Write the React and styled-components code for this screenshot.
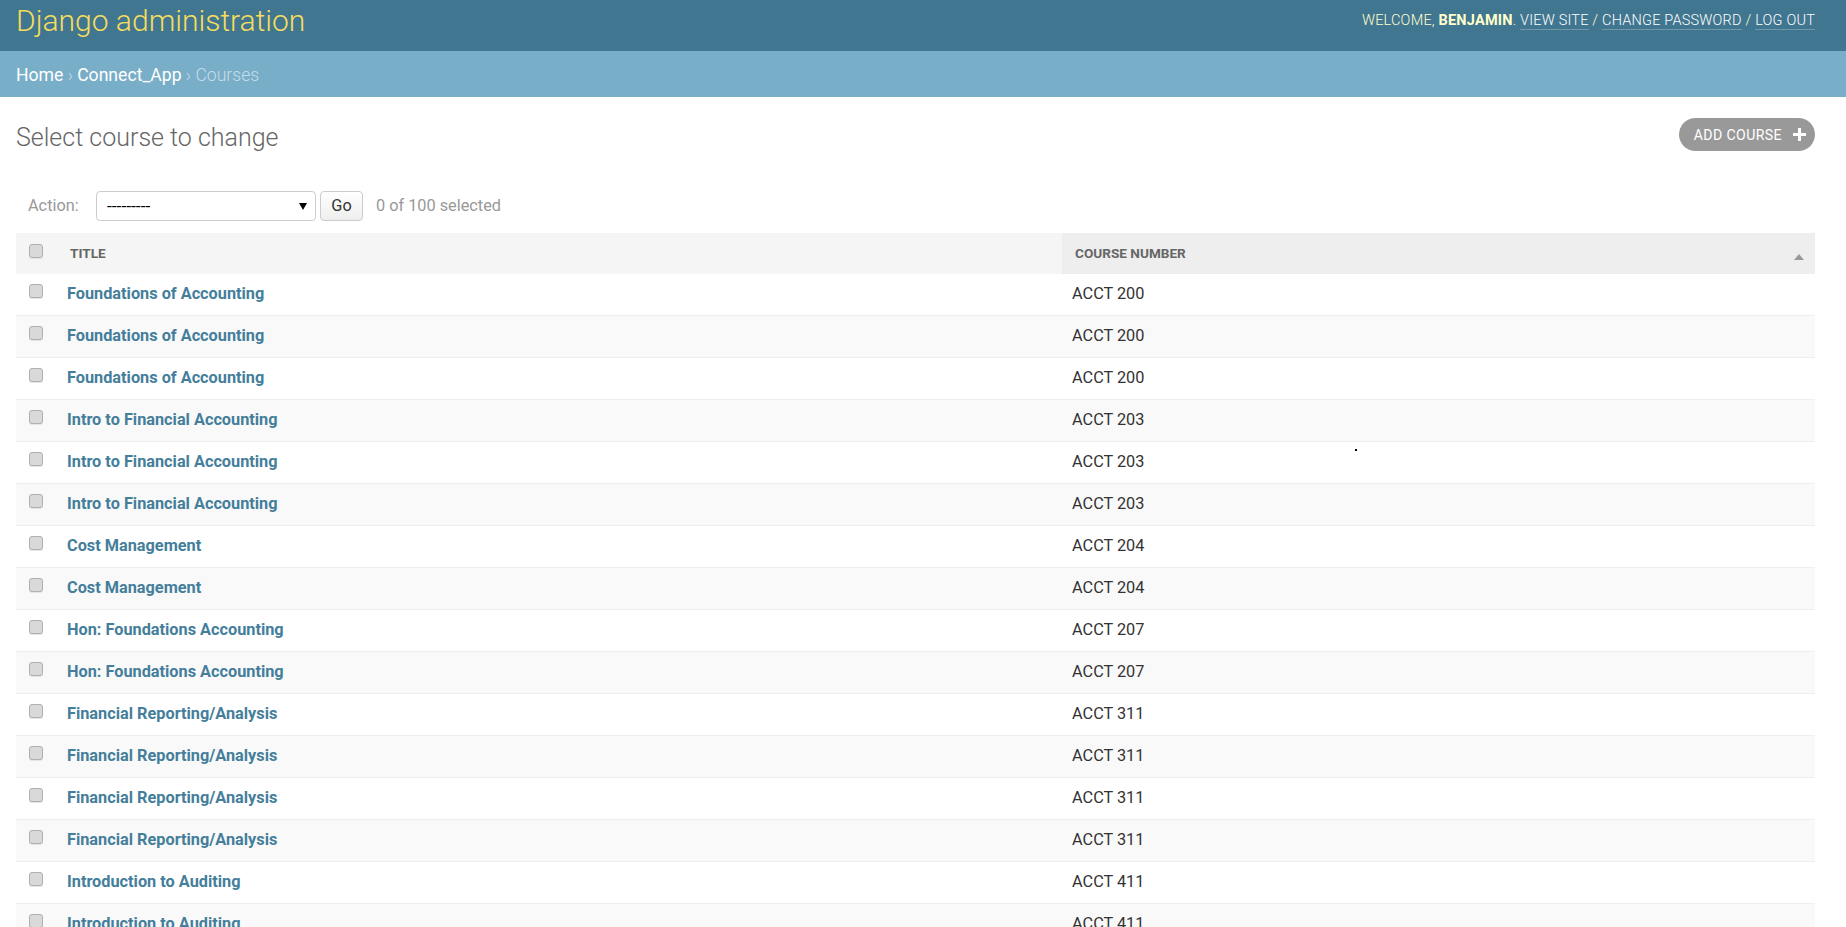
import React from "react";
import styled, { createGlobalStyle } from "styled-components";

const courses = [
  ["Foundations of Accounting", "ACCT 200"],
  ["Foundations of Accounting", "ACCT 200"],
  ["Foundations of Accounting", "ACCT 200"],
  ["Intro to Financial Accounting", "ACCT 203"],
  ["Intro to Financial Accounting", "ACCT 203"],
  ["Intro to Financial Accounting", "ACCT 203"],
  ["Cost Management", "ACCT 204"],
  ["Cost Management", "ACCT 204"],
  ["Hon: Foundations Accounting", "ACCT 207"],
  ["Hon: Foundations Accounting", "ACCT 207"],
  ["Financial Reporting/Analysis", "ACCT 311"],
  ["Financial Reporting/Analysis", "ACCT 311"],
  ["Financial Reporting/Analysis", "ACCT 311"],
  ["Financial Reporting/Analysis", "ACCT 311"],
  ["Introduction to Auditing", "ACCT 411"],
  ["Introduction to Auditing", "ACCT 411"],
];

const GlobalStyle = createGlobalStyle`
  html, body {
    margin: 0;
    height: 100%;
    overflow: hidden;
    background: #fff;
    color: #333;
    font-family: Roboto, "Liberation Sans", sans-serif;
  }
`;

const Header = styled.header`
  display: flex;
  justify-content: space-between;
  height: 51px;
  padding: 0 31px 0 16px;
  background: #417690;
  color: #ffc;
`;

const Branding = styled.h1`
  margin: 0;
  font-size: 30px;
  line-height: 41px;
  font-weight: 300;
  color: #f5dd5d;
`;

const UserTools = styled.div`
  padding-top: 12px;
  font-size: 14.5px;
  line-height: 17px;
  font-weight: 300;
  letter-spacing: 0.2px;
  text-transform: uppercase;
`;

const UserName = styled.strong`
  font-weight: 700;
`;

const ToolLink = styled.a`
  color: #fff;
  text-decoration: none;
  border-bottom: 1px solid rgba(255, 255, 255, 0.25);
`;

const Breadcrumbs = styled.nav`
  height: 46px;
  padding: 0 16px;
  background: #79aec8;
  color: #c4dce8;
  font-size: 17.6px;
  line-height: 48px;
  font-weight: 300;
`;

const Crumb = styled.a`
  color: #fff;
  font-weight: 400;
  text-decoration: none;
`;

const Content = styled.main`
  padding: 0 31px 0 16px;
`;

const TitleRow = styled.div`
  display: flex;
  justify-content: space-between;
  align-items: flex-start;
  height: 94px;
  padding-top: 21px;
  box-sizing: border-box;
`;

const Title = styled.h2`
  margin: 0;
  font-size: 25px;
  line-height: 40px;
  font-weight: 300;
  color: #666;
`;

const AddButton = styled.a`
  display: flex;
  align-items: center;
  gap: 11px;
  height: 33px;
  padding: 0 9px 0 15px;
  border-radius: 17px;
  background: #999;
  color: #fff;
  font-size: 14.1px;
  font-weight: 400;
  letter-spacing: 0.4px;
  text-decoration: none;
  text-transform: uppercase;
`;

const PlusIcon = () => (
  <svg width="13" height="13" viewBox="0 0 13 13" aria-hidden="true">
    <path d="M5 0h3v5h5v3H8v5H5V8H0V5h5z" fill="#fff" />
  </svg>
);

const Actions = styled.div`
  display: flex;
  align-items: center;
  height: 30px;
  margin-bottom: 12px;
  padding-left: 12px;
  color: #999;
  font-size: 16.3px;
`;

const ActionLabel = styled.label`
  width: 68px;
  padding-bottom: 2px;
`;

const SelectWrap = styled.span`
  position: relative;
  display: block;
  width: 220px;
`;

const ActionSelect = styled.select`
  display: block;
  appearance: none;
  width: 100%;
  height: 30px;
  padding: 0 10px;
  border: 1px solid #ccc;
  border-radius: 4px;
  background: #fff;
  color: #000;
  font-family: Roboto, sans-serif;
  font-size: 17.4px;
`;

const SelectArrow = styled.i`
  position: absolute;
  top: 12px;
  right: 9px;
  border-left: 4px solid transparent;
  border-right: 4px solid transparent;
  border-top: 7px solid #000;
  pointer-events: none;
`;

const GoButton = styled.button`
  width: 43px;
  height: 30px;
  margin-left: 4px;
  padding: 0 0 2px;
  border: 1px solid #ccc;
  border-radius: 4px;
  background: linear-gradient(#fff, #eee);
  color: #333;
  font-family: Roboto, sans-serif;
  font-size: 16.3px;
`;

const Counter = styled.span`
  margin-left: 13px;
  padding-bottom: 2px;
`;

const Table = styled.table`
  width: 100%;
  table-layout: fixed;
  border-collapse: separate;
  border-spacing: 0;
`;

const HeadCell = styled.th`
  height: 41px;
  padding: 0 ${(p) => (p.$sorted ? "11px 2px 13px" : "0 2px 8px")};
  box-sizing: border-box;
  background: ${(p) => (p.$sorted ? "#eee" : "#f5f5f5")};
  color: #666;
  font-size: 13.6px;
  font-weight: 700;
  text-align: left;
  text-transform: uppercase;
`;

const SortedLabel = styled.div`
  display: flex;
  align-items: center;
  justify-content: space-between;
`;

const SortArrow = styled.span`
  margin-top: 8px;
  border-left: 5px solid transparent;
  border-right: 5px solid transparent;
  border-bottom: 6px solid #999;
`;

const Cell = styled.td`
  height: 42px;
  padding: 0 0 2px ${(p) => p.$pad || 10}px;
  box-sizing: border-box;
  border-bottom: 1px solid #eee;
  background: ${(p) => (p.$even ? "#f9f9f9" : "#fff")};
  font-size: 16.3px;
`;

const CheckCell = styled(Cell)`
  padding: 0 0 8px 13px;
`;

const HeadCheckCell = styled(HeadCell)`
  padding: 0 0 6px 13px;
`;

const Check = styled.input.attrs({ type: "checkbox" })`
  display: block;
  appearance: none;
  width: 14px;
  height: 14px;
  margin: 0;
  border: 1px solid #b0b0b0;
  border-radius: 3px;
  background: #d9d9d9;
  box-shadow: 0 1px 0 #e4e4e4;
`;

const CourseLink = styled.a`
  color: #447e9b;
  font-weight: 700;
  text-decoration: none;
`;

const Speck = styled.i`
  position: absolute;
  left: 1355px;
  top: 449px;
  width: 2px;
  height: 2px;
  background: #000;
`;

export default function App() {
  return (
    <>
      <GlobalStyle />
      <Header>
        <Branding>Django administration</Branding>
        <UserTools>
          Welcome, <UserName>Benjamin</UserName>.{" "}
          <ToolLink href="#">View site</ToolLink> /{" "}
          <ToolLink href="#">Change password</ToolLink> /{" "}
          <ToolLink href="#">Log out</ToolLink>
        </UserTools>
      </Header>
      <Breadcrumbs>
        <Crumb href="#">Home</Crumb> › <Crumb href="#">Connect_App</Crumb> › Courses
      </Breadcrumbs>
      <Content>
        <TitleRow>
          <Title>Select course to change</Title>
          <AddButton href="#">
            Add course
            <PlusIcon />
          </AddButton>
        </TitleRow>
        <Actions>
          <ActionLabel>Action:</ActionLabel>
          <SelectWrap>
            <ActionSelect defaultValue="">
              <option value="">---------</option>
              <option value="delete">Delete selected courses</option>
            </ActionSelect>
            <SelectArrow />
          </SelectWrap>
          <GoButton type="button">Go</GoButton>
          <Counter>0 of 100 selected</Counter>
        </Actions>
        <Table>
          <colgroup>
            <col style={{ width: 46 }} />
            <col style={{ width: 1000 }} />
            <col />
          </colgroup>
          <thead>
            <tr>
              <HeadCheckCell>
                <Check />
              </HeadCheckCell>
              <HeadCell>Title</HeadCell>
              <HeadCell $sorted>
                <SortedLabel>
                  Course number
                  <SortArrow />
                </SortedLabel>
              </HeadCell>
            </tr>
          </thead>
          <tbody>
            {courses.map(([title, number], i) => (
              <tr key={i}>
                <CheckCell $even={i % 2 === 1}>
                  <Check />
                </CheckCell>
                <Cell $even={i % 2 === 1} $pad={5}>
                  <CourseLink href="#">{title}</CourseLink>
                </Cell>
                <Cell $even={i % 2 === 1}>{number}</Cell>
              </tr>
            ))}
          </tbody>
        </Table>
      </Content>
      <Speck />
    </>
  );
}
